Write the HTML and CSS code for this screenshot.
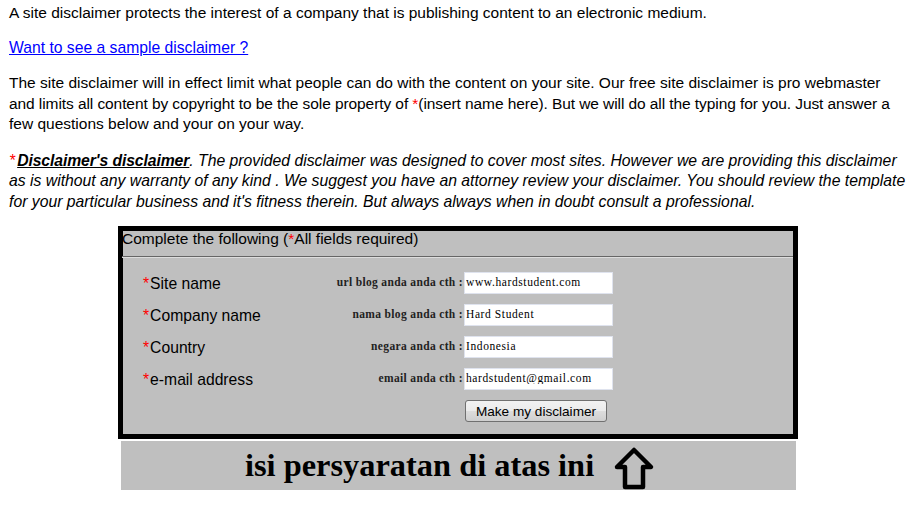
FILE: index.html
```html
<!DOCTYPE html>
<html lang="en">
<head>
  <meta charset="UTF-8">
  <title>Site disclaimer</title>
  <link rel="stylesheet" href="styles.css">
</head>
<body>
  <p class="intro">A site disclaimer protects the interest of a company that is publishing content to an electronic medium.</p>
  <p class="sample"><a href="#">Want to see a sample disclaimer ?</a></p>
  <p class="about">The site disclaimer will in effect limit what people can do with the content on your site. Our free site disclaimer is pro webmaster<br><span class="tight">and limits all content by copyright to be the sole property of <span class="req">*</span>(insert name here). But we will do all the typing for you. Just answer a</span><br>few questions below and your on your way.</p>
  <p class="legal"><span class="req">*</span><strong>Disclaimer's disclaimer</strong>. The provided disclaimer was designed to cover most sites. However we are providing this disclaimer<br>as is without any warranty of any kind . We suggest you have an attorney review your disclaimer. You should review the template<br>for your particular business and it's fitness therein. But always always when in doubt consult a professional.</p>

  <form class="box">
    <div class="box-title">Complete the following (<span class="req">*</span>All fields required)</div>
    <div class="rows">
      <div class="row">
        <label class="name"><span class="req">*</span>Site name</label>
        <span class="hint">url blog anda anda cth :</span>
        <input class="field" type="text" value="www.hardstudent.com">
      </div>
      <div class="row">
        <label class="name"><span class="req">*</span>Company name</label>
        <span class="hint">nama blog anda cth :</span>
        <input class="field" type="text" value="Hard Student">
      </div>
      <div class="row">
        <label class="name"><span class="req">*</span>Country</label>
        <span class="hint">negara anda cth :</span>
        <input class="field" type="text" value="Indonesia">
      </div>
      <div class="row">
        <label class="name"><span class="req">*</span>e-mail address</label>
        <span class="hint">email anda cth :</span>
        <input class="field" type="text" value="hardstudent@gmail.com">
      </div>
    </div>
    <div class="actions">
      <button class="submit" type="button">Make my disclaimer</button>
    </div>
  </form>

  <div class="banner">
    <span class="banner-text">isi persyaratan di atas ini</span>
    <svg class="arrow" width="44" height="44" viewBox="0 0 44 44">
      <path d="M22 4 L39 21 L31 21 L31 41 L13 41 L13 21 L5 21 Z" fill="none" stroke="#000" stroke-width="4.5" stroke-linejoin="round"/>
    </svg>
  </div>
</body>
</html>
```

FILE: styles.css
```css
body {
  margin: 0;
  padding: 3px 0 0 9px;
  font-family: "Liberation Sans", Arial, sans-serif;
  font-size: 15.5px;
  line-height: 20.5px;
  color: #000;
  background-color: #fff;
  overflow: hidden;
}

p {
  margin: 0;
  white-space: nowrap;
}

.sample {
  margin-top: 14px;
  font-size: 15.7px;
}

.about {
  margin-top: 15px;
}

.tight {
  letter-spacing: -0.08px;
}

.legal {
  margin-top: 16px;
  font-size: 15.75px;
  font-style: italic;
}

.legal .req {
  margin-right: 2px;
}

a {
  color: #00f;
}

.req {
  color: #f00;
}

.legal strong {
  letter-spacing: -0.1px;
  text-decoration: underline;
}

/* Form box */
.box {
  width: 670px;
  height: 203px;
  margin: 14px 0 0 109px;
  border: 5px solid #000;
  background-color: #bfbfbf;
}

.box-title {
  height: 25px;
  margin-left: -1px;
  line-height: 16px;
  border-bottom: 1px solid #666;
  box-shadow: 0 1px 0 #ddd;
}

.rows {
  display: flex;
  flex-direction: column;
  gap: 10px;
  padding: 15px 0 0 20px;
}

.row {
  display: flex;
  align-items: center;
  height: 22px;
}

.name {
  width: 190px;
  padding-top: 2px;
  font-size: 15.7px;
}

.name .req {
  margin-right: 1px;
}

.hint {
  width: 130px;
  padding-right: 1px;
  padding-bottom: 2px;
  text-align: right;
  font-family: "Liberation Serif", "Times New Roman", serif;
  font-size: 11.5px;
  font-weight: bold;
  letter-spacing: 0.35px;
  color: #222;
  white-space: nowrap;
}

.field {
  width: 149px;
  height: 22px;
  margin: 0;
  padding: 0 2px 2px 1px;
  box-sizing: border-box;
  border: 1px solid #dfe3ee;
  background-color: #fff;
  font-family: "Liberation Serif", "Times New Roman", serif;
  font-size: 11.5px;
  letter-spacing: 0.6px;
  color: #000;
}

.actions {
  padding: 10px 0 0 342px;
}

.submit {
  width: 142px;
  height: 22px;
  padding: 0;
  font-family: "Liberation Sans", Arial, sans-serif;
  font-size: 13.6px;
  color: #000;
  border: 1px solid #707070;
  border-radius: 3px;
  background: linear-gradient(#f2f2f2 0%, #ebebeb 50%, #dddddd 50%, #cfcfcf 100%);
}

/* Banner under the form */
.banner {
  display: flex;
  align-items: center;
  width: 675px;
  height: 49px;
  margin: 2px 0 0 112px;
  padding-left: 124px;
  box-sizing: border-box;
  background-color: #bfbfbf;
}

.banner-text {
  font-family: "Liberation Serif", "Times New Roman", serif;
  font-size: 32.4px;
  font-weight: bold;
  white-space: nowrap;
}

.arrow {
  flex: none;
  align-self: flex-end;
  margin-left: 18px;
}
```
